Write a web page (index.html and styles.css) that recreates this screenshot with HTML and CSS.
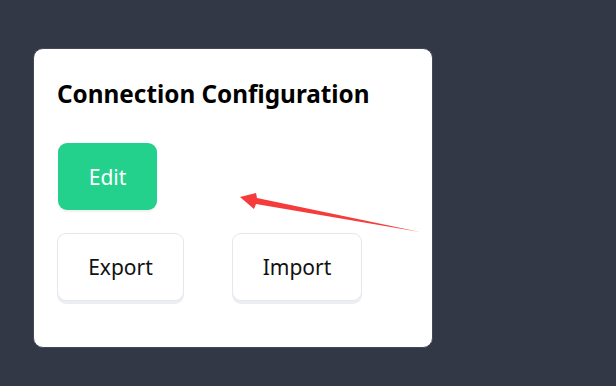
FILE: index.html
```html
<!DOCTYPE html>
<html>
<head>
<meta charset="utf-8">
<link rel="stylesheet" href="styles.css">
</head>
<body>
<div class="card">
  <h2 class="title">Connection Configuration</h2>
  <div class="row row-one">
    <button class="btn btn-primary">Edit</button>
  </div>
  <div class="row row-two">
    <button class="btn btn-default btn-export">Export</button>
    <button class="btn btn-default btn-import">Import</button>
  </div>
</div>
<svg class="arrow" width="616" height="386" viewBox="0 0 616 386">
  <polygon points="240,197 256,193 257,198 420,232 256,204 254,209" fill="#f53b3b"/>
</svg>
</body>
</html>
```
FILE: styles.css
```css
html, body {
  margin: 0;
  padding: 0;
}
body {
  width: 616px;
  height: 386px;
  background: #323845;
  font-family: "Noto Sans", "Open Sans", sans-serif;
  padding: 48px 0 0 33px;
  box-sizing: border-box;
  position: relative;
  overflow: hidden;
}
.card {
  width: 400px;
  height: 300px;
  box-sizing: border-box;
  background: #ffffff;
  border: 1px solid #434958;
  border-radius: 10px;
  padding: 29px 24px 0 23px;
  display: flex;
  flex-direction: column;
}
.title {
  margin: 0;
  font-size: 24.3px;
  font-weight: 700;
  color: #000;
  line-height: 32px;
}
.row {
  display: flex;
  gap: 48px;
}
.row-one {
  margin-top: 33px;
}
.row-two {
  margin-top: 23px;
}
.btn {
  font-family: inherit;
  font-size: 21px;
  height: 68px;
  border-radius: 9px;
  cursor: pointer;
  box-sizing: border-box;
  padding: 0;
}
.btn-primary {
  width: 99px;
  height: 67px;
  background: #24d18c;
  color: #fff;
  border: none;
  margin-left: 1px;
  box-shadow: 0 2px 2px rgba(0,0,0,0.06);
}
.btn-default {
  background: #fff;
  color: #111;
  border: 1px solid #e4e8ee;
  box-shadow: 0 3px 0 #eceef2;
}
.btn-export {
  width: 127px;
}
.btn-import {
  width: 130px;
}
.arrow {
  position: absolute;
  left: 0;
  top: 0;
  pointer-events: none;
}
```
